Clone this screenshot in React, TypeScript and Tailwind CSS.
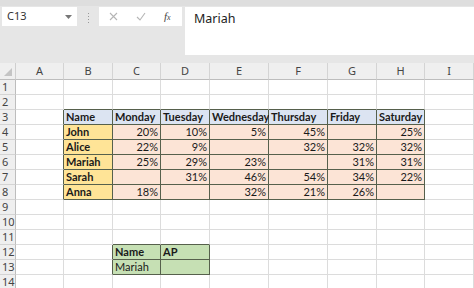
const COLS = ['A', 'B', 'C', 'D', 'E', 'F', 'G', 'H', 'I'];
const ROWS = [1, 2, 3, 4, 5, 6, 7, 8, 9, 10, 11, 12, 13, 14];

type Cell = { v: string; bold?: boolean; num?: boolean };

const DAYS = ['Name', 'Monday', 'Tuesday', 'Wednesday', 'Thursday', 'Friday', 'Saturday'];
const DATA: [string, string[]][] = [
  ['John', ['20%', '10%', '5%', '45%', '', '25%']],
  ['Alice', ['22%', '9%', '', '32%', '32%', '32%']],
  ['Mariah', ['25%', '29%', '23%', '', '31%', '31%']],
  ['Sarah', ['', '31%', '46%', '54%', '34%', '22%']],
  ['Anna', ['18%', '', '32%', '21%', '26%', '']],
];

function getCell(r: number, c: number): Cell | null {
  if (r === 3 && c >= 1 && c <= 7) return { v: DAYS[c - 1], bold: true };
  if (r >= 4 && r <= 8) {
    const [name, vals] = DATA[r - 4];
    if (c === 1) return { v: name, bold: true };
    if (c >= 2 && c <= 7) return { v: vals[c - 2], num: true };
  }
  if (r === 12 && c === 2) return { v: 'Name', bold: true };
  if (r === 12 && c === 3) return { v: 'AP', bold: true };
  if (r === 13 && c === 2) return { v: 'Mariah' };
  return null;
}

function inMain(r: number, c: number) {
  return r >= 3 && r <= 8 && c >= 1 && c <= 7;
}
function inSmall(r: number, c: number) {
  return r >= 12 && r <= 13 && c >= 2 && c <= 3;
}
function inTable(r: number, c: number) {
  return inMain(r, c) || inSmall(r, c);
}

function fillClass(r: number, c: number) {
  if (inSmall(r, c)) return 'bg-[#c6e0b4]';
  if (!inMain(r, c)) return 'bg-white';
  if (r === 3) return 'bg-[#dce4f2]';
  if (c === 1) return 'bg-[#ffe497]';
  return 'bg-[#fce4d6]';
}

function GridCell({ r, c }: { r: number; c: number }) {
  const cell = getCell(r, c);
  const darkRight = inTable(r, c) || inTable(r, c + 1);
  const darkBottom = inTable(r, c) || inTable(r + 1, c);
  return (
    <div
      className={`h-[15px] border-r border-b overflow-visible whitespace-nowrap px-[2px] text-[11px] leading-[14px] text-[#1a1a1a] ${fillClass(r, c)} ${
        darkRight ? 'border-r-[#56604c]' : 'border-r-[#dcdcdc]'
      } ${darkBottom ? 'border-b-[#56604c]' : 'border-b-[#dcdcdc]'} ${cell?.num ? 'text-right' : 'text-left'} ${
        cell?.bold ? 'font-bold' : ''
      }`}
      style={{ fontFamily: 'Lato, "Liberation Sans", sans-serif' }}
    >
      {cell?.v}
    </div>
  );
}

export default function App() {
  return (
    <div className="w-[474px] h-[288px] overflow-hidden bg-white" style={{ fontFamily: '"Noto Sans", "Open Sans", sans-serif' }}>
      {/* formula bar area */}
      <div className="h-[63px] bg-[#e6e6e6] border-t-[6px] border-[#dedede] flex items-start pt-[1px]">
        <div className="ml-[2px] w-[75px] h-[19px] bg-white flex items-center justify-between pl-[5px] pr-[5px]">
          <span className="text-[11px] text-[#333]">C13</span>
          <svg width="7" height="4" viewBox="0 0 7 4">
            <path d="M0 0h7L3.5 4z" fill="#777" />
          </svg>
        </div>
        <div className="ml-[11px] mt-[6px] flex flex-col gap-[2px]">
          <span className="block w-[1px] h-[1px] bg-[#999]" />
          <span className="block w-[1px] h-[1px] bg-[#999]" />
          <span className="block w-[1px] h-[1px] bg-[#999]" />
          <span className="block w-[1px] h-[1px] bg-[#999]" />
        </div>
        <div className="ml-[10px] w-[83px] h-[19px] bg-white flex items-center pl-[10px]">
          <svg width="9" height="9" viewBox="0 0 9 9">
            <path d="M1 1l7 7M8 1l-7 7" stroke="#b5b5b5" strokeWidth="1.1" />
          </svg>
          <svg className="ml-[18px]" width="10" height="9" viewBox="0 0 10 9">
            <path d="M1 5l3 3 5-7" stroke="#b5b5b5" strokeWidth="1.1" fill="none" />
          </svg>
          <span className="ml-[18px] text-[11px] italic text-[#444]" style={{ fontFamily: '"Liberation Serif", serif' }}>
            f<span className="text-[8px]">x</span>
          </span>
        </div>
        <div className="ml-[3px] flex-1 h-[48px] bg-white pl-[9px] pt-[1px] leading-[18px]">
          <span className="text-[12.5px] text-[#222]">Mariah</span>
        </div>
      </div>

      {/* sheet */}
      <div className="grid grid-cols-[16px_48px_49px_48px_49px_59px_59px_49px_48px_1fr]">
        <div className="h-[17px] bg-[#efefef] border-r border-b border-r-[#cfcfcf] border-b-[#bdbdbd] relative">
          <svg className="absolute right-[3px] bottom-[3px]" width="8" height="8" viewBox="0 0 8 8">
            <path d="M8 0v8H0z" fill="#c4c4c4" />
          </svg>
        </div>
        {COLS.map((col) => (
          <div
            key={col}
            className="h-[17px] bg-[#efefef] border-r border-b border-r-[#d4d4d4] border-b-[#bdbdbd] flex items-center justify-center text-[11px] text-[#444]"
          >
            {col}
          </div>
        ))}
        {ROWS.map((r) => (
          <div key={r} className="contents">
            <div className="h-[15px] bg-[#efefef] border-r border-b border-r-[#bdbdbd] border-b-[#d4d4d4] pl-[2px] text-[11px] leading-[14px] text-[#444]">
              {r}
            </div>
            {COLS.map((_, c) => (
              <GridCell key={c} r={r} c={c} />
            ))}
          </div>
        ))}
      </div>
    </div>
  );
}
